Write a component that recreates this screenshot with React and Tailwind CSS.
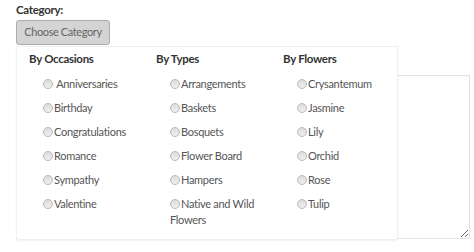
import React from 'react';

const groups = [
  { title: 'By Occasions', items: ['Anniversaries', 'Birthday', 'Congratulations', 'Romance', 'Sympathy', 'Valentine'] },
  { title: 'By Types', items: ['Arrangements', 'Baskets', 'Bosquets', 'Flower Board', 'Hampers', 'Native and Wild Flowers'] },
  { title: 'By Flowers', items: ['Crysantemum', 'Jasmine', 'Lily', 'Orchid', 'Rose', 'Tulip'] },
];

const Radio = () => (
  <span className="inline-block align-[-1px] w-[10px] h-[10px] mr-[1px] rounded-full border border-[#b9b9b9] bg-gradient-to-b from-[#dcdcdc] to-[#f0f0f0]" />
);

export default function App() {
  return (
    <div className="min-h-screen bg-white px-4 pt-[2px] font-['Lato',sans-serif] text-[11px] tracking-[-0.3px]">
      <label className="block font-bold text-[#333] text-[11.5px] leading-[16px]">Category:</label>
      <div className="relative mt-[2px]">
        <button className="h-[25px] w-[94px] rounded-[3px] border border-[#adadad] bg-[#d4d4d4] text-[11px] tracking-[-0.4px] text-[#666]">
          Choose Category
        </button>

        <div className="mt-[4px] mr-[-12px]">
          <div className="h-[26px]" />
          <textarea className="block h-[164px] w-full resize-y border border-[#e2e2e2] bg-white" />
        </div>

        {/* dropdown panel */}
        <div className="absolute left-0 top-[26px] w-[382px] h-[194px] bg-white border border-[#f0f0f0] rounded-b-[3px] shadow-[0_1px_2px_rgba(0,0,0,0.06)] pl-[12px] pt-[5px] flex">
          {groups.map((g, gi) => (
            <div key={g.title} className={gi < 2 ? 'w-[127px] shrink-0' : 'flex-1'}>
              <div className="font-bold text-[#333] text-[11.5px] leading-[14px] mb-[10px]">{g.title}</div>
              <ul className="pl-[14px] pr-[6px]">
                {g.items.map((item, i) => (
                  <li key={item} className="text-[#555] leading-[16px] mb-[8px]">
                    <Radio />
                    {i === 0 && gi === 0 ? ' ' : ''}
                    {item}
                  </li>
                ))}
              </ul>
            </div>
          ))}
        </div>
      </div>
    </div>
  );
}
